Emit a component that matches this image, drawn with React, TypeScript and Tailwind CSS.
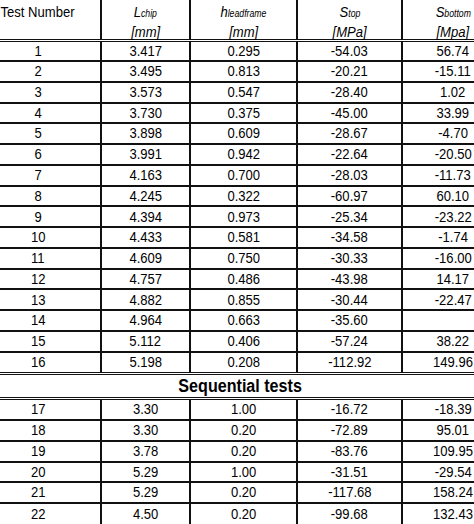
import React from 'react';

type Row = [string, string, string, string, string];

const mainRows: Row[] = [
  ['1', '3.417', '0.295', '-54.03', '56.74'],
  ['2', '3.495', '0.813', '-20.21', '-15.11'],
  ['3', '3.573', '0.547', '-28.40', '1.02'],
  ['4', '3.730', '0.375', '-45.00', '33.99'],
  ['5', '3.898', '0.609', '-28.67', '-4.70'],
  ['6', '3.991', '0.942', '-22.64', '-20.50'],
  ['7', '4.163', '0.700', '-28.03', '-11.73'],
  ['8', '4.245', '0.322', '-60.97', '60.10'],
  ['9', '4.394', '0.973', '-25.34', '-23.22'],
  ['10', '4.433', '0.581', '-34.58', '-1.74'],
  ['11', '4.609', '0.750', '-30.33', '-16.00'],
  ['12', '4.757', '0.486', '-43.98', '14.17'],
  ['13', '4.882', '0.855', '-30.44', '-22.47'],
  ['14', '4.964', '0.663', '-35.60', ''],
  ['15', '5.112', '0.406', '-57.24', '38.22'],
  ['16', '5.198', '0.208', '-112.92', '149.96'],
];

const seqRows: Row[] = [
  ['17', '3.30', '1.00', '-16.72', '-18.39'],
  ['18', '3.30', '0.20', '-72.89', '95.01'],
  ['19', '3.78', '0.20', '-83.76', '109.95'],
  ['20', '5.29', '1.00', '-31.51', '-29.54'],
  ['21', '5.29', '0.20', '-117.68', '158.24'],
  ['22', '4.50', '0.20', '-99.68', '132.43'],
];

// column widths, first one starts off-screen to the left
const widths = ['w-[126px]', 'w-[89px]', 'w-[107px]', 'w-[105px]', 'w-[102px]'];

const Narrow: React.FC<{ children: React.ReactNode; className?: string }> = ({ children, className = '' }) => (
  <span className={`inline-block scale-x-[0.87] whitespace-nowrap ${className}`}>{children}</span>
);

const DataRow: React.FC<{ row: Row; height: string; bottom: string }> = ({ row, height, bottom }) => (
  <div className={`flex ${height} ${bottom} border-[#111]`}>
    {row.map((v, i) => (
      <div key={i} className={`${widths[i]} shrink-0 h-full flex items-center justify-center border-r-2 border-[#111]`}>
        <Narrow>{v}</Narrow>
      </div>
    ))}
  </div>
);

const HeadCell: React.FC<{ w: string; top: React.ReactNode; unit?: string }> = ({ w, top, unit }) => (
  <div className={`${w} shrink-0 h-full flex flex-col items-center pt-[3px] border-r-2 border-[#111] leading-[18px]`}>
    <Narrow>{top}</Narrow>
    {unit && <Narrow className="italic">{unit}</Narrow>}
  </div>
);

const Sym: React.FC<{ base: string; sub: string }> = ({ base, sub }) => (
  <span className="italic">
    {base}
    <span className="text-[10px]">{sub}</span>
  </span>
);

export default function App() {
  return (
    <div className="w-[474px] h-[524px] overflow-hidden bg-white text-black font-['Liberation_Sans',Arial,sans-serif] text-[15px]">
      <div className="ml-[-24px] w-[529px]">
        <div className="flex h-[42px] border-b-[3px] border-double border-[#111]">
          <HeadCell w={widths[0]} top="Test Number" />
          <HeadCell w={widths[1]} top={<Sym base="L" sub="chip" />} unit="[mm]" />
          <HeadCell w={widths[2]} top={<Sym base="h" sub="leadframe" />} unit="[mm]" />
          <HeadCell w={widths[3]} top={<Sym base="S" sub="top" />} unit="[MPa]" />
          <HeadCell w={widths[4]} top={<Sym base="S" sub="bottom" />} unit="[Mpa]" />
        </div>

        {mainRows.map((r, i) => (
          <DataRow
            key={r[0]}
            row={r}
            height={i === 0 ? 'h-[20px]' : i === 15 ? 'h-[22.6px]' : 'h-[20.78px]'}
            bottom={i === 15 ? 'border-b-[3px] border-double' : 'border-b-2'}
          />
        ))}

        <div className="h-[25px] flex items-center justify-center border-b-[3px] border-double border-[#111]">
          <span className="inline-block scale-x-[0.92] font-bold text-[17.5px] leading-none">Sequential tests</span>
        </div>

        {seqRows.map((r, i) => (
          <DataRow
            key={r[0]}
            row={r}
            height={i === 5 ? 'h-[22px]' : 'h-[20.76px]'}
            bottom="border-b-2"
          />
        ))}
      </div>
    </div>
  );
}
